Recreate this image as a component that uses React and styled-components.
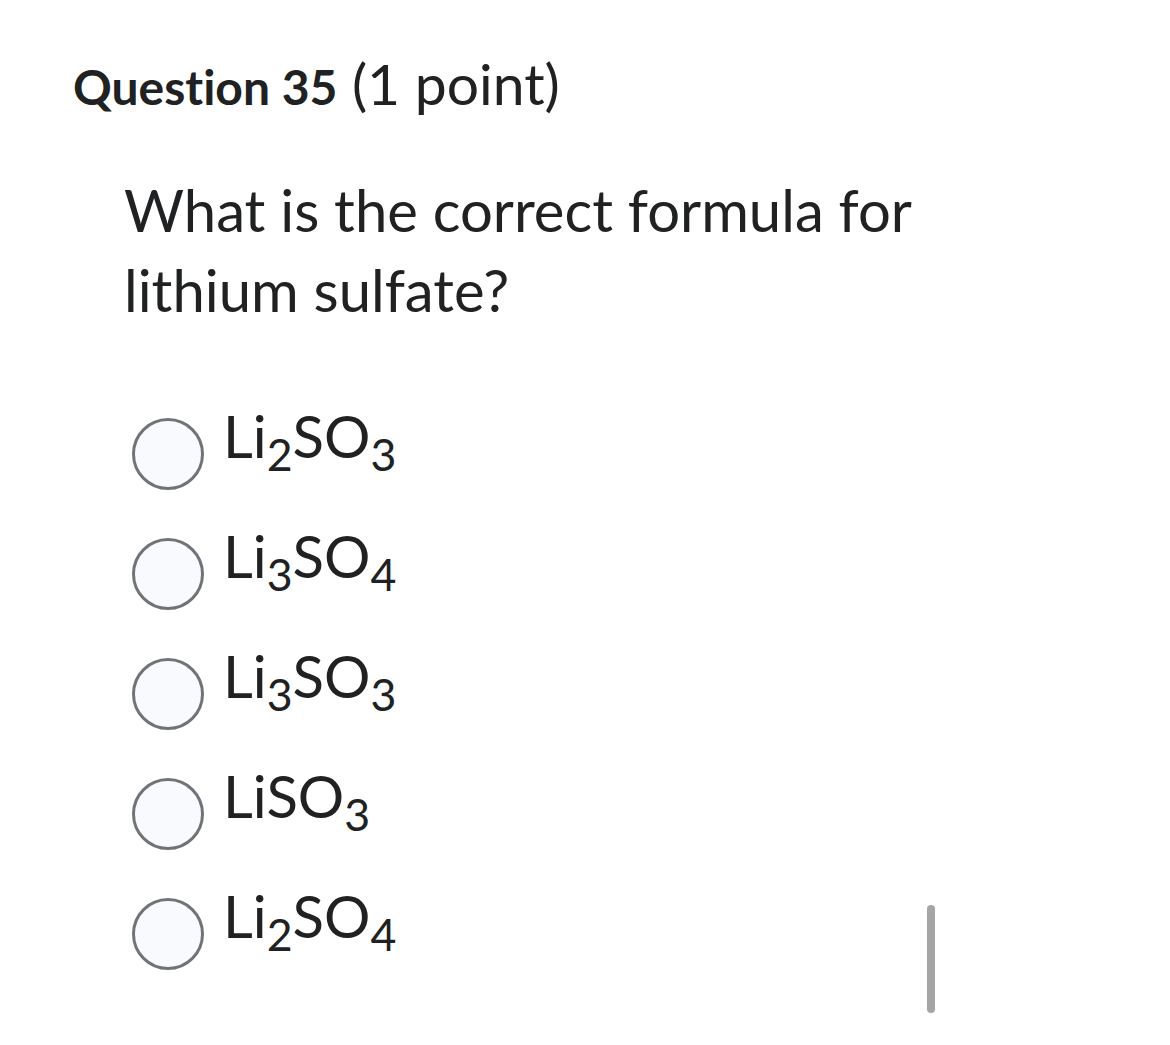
import styled, { createGlobalStyle } from "styled-components";

const GlobalStyle = createGlobalStyle`
  html, body {
    margin: 0;
    padding: 0;
    background: #ffffff;
  }
  body {
    font-family: Lato, "Noto Sans", sans-serif;
    color: #202122;
    font-variant-ligatures: none;
  }
`;

const Page = styled.div`
  position: relative;
  width: 1170px;
  height: 1045px;
  box-sizing: border-box;
  padding: 53px 0 0 73px;
  overflow: hidden;
`;

const Title = styled.h2`
  margin: 0;
  font-size: 57px;
  line-height: 60px;
  font-weight: 400;
  color: #202122;
`;

const TitleStrong = styled.span`
  font-size: 48px;
  font-weight: 700;
`;

const Prompt = styled.p`
  margin: 53px 0 0 51px;
  width: 840px;
  font-size: 58px;
  line-height: 80px;
  font-weight: 400;
  color: #202122;
`;

const Options = styled.div`
  display: flex;
  flex-direction: column;
  gap: 48px;
  margin: 88px 0 0 59px;
`;

const Option = styled.label`
  display: flex;
  align-items: flex-start;
  gap: 19px;
  height: 72px;
  cursor: pointer;
`;

const Radio = styled.span`
  flex: none;
  width: 72px;
  height: 72px;
  box-sizing: border-box;
  border-radius: 50%;
  border: 3px solid #6f7479;
  background: #f9fafe;
`;

const Formula = styled.span`
  margin-top: -11px;
  font-size: 58px;
  line-height: 1;
  color: #202122;
`;

const Sub = styled.sub`
  font-size: 0.77em;
  vertical-align: -13px;
  line-height: 0;
`;

const Scrollbar = styled.div`
  position: absolute;
  left: 927px;
  top: 905px;
  width: 8px;
  height: 108px;
  border-radius: 4px;
  background: #a5a5a5;
`;

const options = [
  ["Li", "2", "SO", "3"],
  ["Li", "3", "SO", "4"],
  ["Li", "3", "SO", "3"],
  ["LiSO", null, null, "3"],
  ["Li", "2", "SO", "4"],
];

export default function App() {
  return (
    <Page>
      <GlobalStyle />
      <Title>
        <TitleStrong>Question 35</TitleStrong> (1 point)
      </Title>
      <Prompt>What is the correct formula for lithium sulfate?</Prompt>
      <Options>
        {options.map(([a, s1, b, s2], i) => (
          <Option key={i}>
            <Radio />
            <Formula>
              {a}
              {s1 && <Sub>{s1}</Sub>}
              {b}
              <Sub>{s2}</Sub>
            </Formula>
          </Option>
        ))}
      </Options>
      <Scrollbar />
    </Page>
  );
}
